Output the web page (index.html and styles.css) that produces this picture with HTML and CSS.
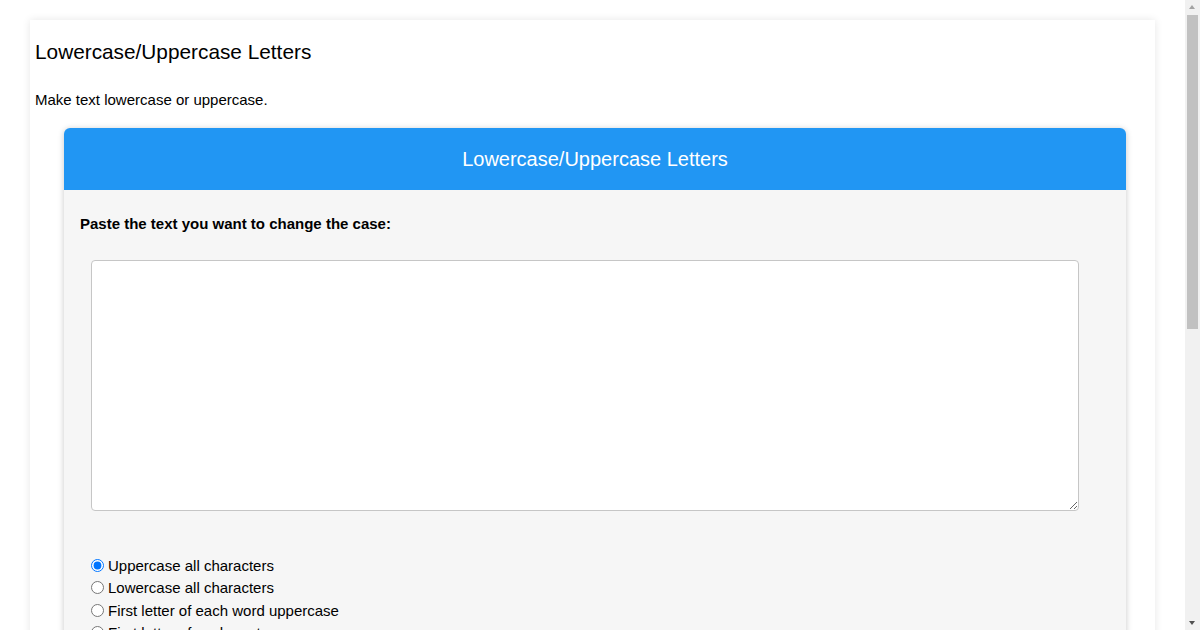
FILE: index.html
```html
<!DOCTYPE html>
<html lang="en">
<head>
<meta charset="utf-8">
<title>Lowercase/Uppercase Letters</title>
<link rel="stylesheet" href="styles.css">
</head>
<body>
<div class="page">
  <h1 class="title">Lowercase/Uppercase Letters</h1>
  <p class="lead">Make text lowercase or uppercase.</p>
  <div class="tool">
    <div class="tool-head">Lowercase/Uppercase Letters</div>
    <div class="tool-body">
      <label class="prompt" for="src">Paste the text you want to change the case:</label>
      <textarea id="src" class="text"></textarea>
      <div class="options">
        <label class="opt"><input type="radio" name="mode" checked>Uppercase all characters</label>
        <label class="opt"><input type="radio" name="mode">Lowercase all characters</label>
        <label class="opt"><input type="radio" name="mode">First letter of each word uppercase</label>
        <label class="opt"><input type="radio" name="mode">First letter of each sentence uppercase</label>
        <label class="opt"><input type="radio" name="mode">Invert case of all characters</label>
      </div>
      <button class="convert" type="button">Convert</button>
      <textarea class="text out"></textarea>
    </div>
  </div>
</div>
<div class="scrollbar" aria-hidden="true">
  <span class="sb-up"></span>
  <span class="sb-thumb"></span>
  <span class="sb-down"></span>
</div>
</body>
</html>
```
FILE: styles.css
```css
html, body {
  margin: 0;
  padding: 0;
  background: #ffffff;
  font-family: "Liberation Sans", Arial, sans-serif;
  color: #000;
}

html::-webkit-scrollbar {
  display: none;
}

body {
  padding-right: 15px;
}

.page {
  margin: 20px 30px 20px;
  padding: 20px 5px 40px;
  background: #fff;
  box-shadow: 0 0 8px rgba(0, 0, 0, 0.1);
}

.title {
  margin: 0;
  font-size: 20.8px;
  line-height: 23px;
  font-weight: normal;
}

.lead {
  margin: 28px 0 0;
  font-size: 15px;
  line-height: 17px;
}

.tool {
  margin: 20px 0 0 29px;
  width: 1062px;
  border-radius: 6px;
  box-shadow: 0 1px 6px rgba(0, 0, 0, 0.22);
  background: #f6f6f6;
}

.tool-head {
  height: 62px;
  display: flex;
  align-items: center;
  justify-content: center;
  background: #2196f3;
  color: #fff;
  font-size: 20px;
  border-radius: 6px 6px 0 0;
}

.tool-body {
  padding: 25px 16px 30px;
  display: flex;
  flex-direction: column;
  align-items: flex-start;
}

.prompt {
  font-size: 15px;
  line-height: 17px;
  font-weight: bold;
}

.text {
  box-sizing: border-box;
  margin: 28px 0 0 11px;
  width: 988px;
  height: 251px;
  border: 1px solid #c6c6c6;
  border-radius: 4px;
  background: #fff;
  font-family: inherit;
  font-size: 15px;
}

.options {
  margin: 43px 0 0 11px;
  display: flex;
  flex-direction: column;
}

.opt {
  display: flex;
  align-items: center;
  height: 22.5px;
  font-size: 15px;
}

.opt input {
  margin: 0 4px 0 0;
  width: 13px;
  height: 13px;
}

.convert {
  margin: 24px 0 0 11px;
  padding: 9px 22px;
  border: none;
  border-radius: 4px;
  background: #2196f3;
  color: #fff;
  font-family: inherit;
  font-size: 15px;
}

.out {
  margin-top: 24px;
}

.scrollbar {
  position: fixed;
  top: 0;
  right: 0;
  width: 15px;
  height: 100vh;
  background: #f1f1f1;
}

.sb-thumb {
  position: absolute;
  left: 2px;
  top: 15px;
  width: 11px;
  height: 314px;
  background: #c1c1c1;
}

.sb-up,
.sb-down {
  position: absolute;
  left: 4px;
  width: 0;
  height: 0;
  border-left: 3.5px solid transparent;
  border-right: 3.5px solid transparent;
}

.sb-up {
  top: 5px;
  border-bottom: 4px solid #a3a3a3;
}

.sb-down {
  bottom: 5px;
  border-top: 4px solid #505050;
}
```
